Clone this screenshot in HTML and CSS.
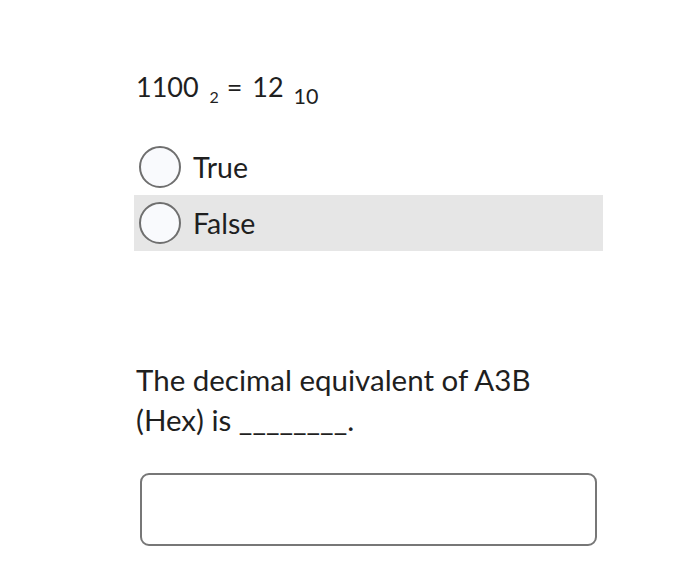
FILE: index.html
```html
<!DOCTYPE html>
<html>
<head>
<meta charset="utf-8">
<link rel="stylesheet" href="styles.css">
</head>
<body>
<div class="page">
  <section class="question">
    <p class="stem">1100 <sub class="sub-small">2</sub> <span class="eq">=</span> <span class="num">12</span> <sub class="sub-large">10</sub></p>
    <div class="options">
      <label class="option">
        <span class="radio"></span>
        <span class="option-text">True</span>
      </label>
      <label class="option option-hover">
        <span class="radio"></span>
        <span class="option-text">False</span>
      </label>
    </div>
  </section>
  <section class="question question-two">
    <p class="stem stem-two">The decimal equivalent of A3B (Hex) is ________.</p>
    <div class="answer-box"></div>
  </section>
</div>
</body>
</html>
```

FILE: styles.css
```css
html, body {
  margin: 0;
  padding: 0;
  background: #ffffff;
}

body {
  font-family: Lato, "Open Sans", sans-serif;
  color: #1f1f1f;
}

.page {
  width: 469px;
  padding: 66px 0 0 134px;
}

.stem {
  margin: 0 0 0 2px;
  font-size: 27px;
  line-height: 42px;
}

.sub-small {
  font-size: 16px;
  vertical-align: -6px;
  line-height: 0;
  margin-left: 4px;
}

.eq {
  margin-left: 1px;
}

.num {
  margin-left: 3px;
}

.sub-large {
  font-size: 21.5px;
  vertical-align: -7px;
  line-height: 0;
  margin-left: 3px;
}

.options {
  margin-top: 31px;
  display: flex;
  flex-direction: column;
}

.option {
  display: flex;
  align-items: center;
  height: 56px;
  gap: 12px;
  padding-left: 5px;
}

.option-hover {
  background: #e6e6e6;
}

.radio {
  width: 38px;
  height: 38px;
  border: 2px solid #6f6f6f;
  border-radius: 50%;
  background: #f9fafd;
  flex: none;
}

.option-text {
  font-size: 28.5px;
  line-height: 1;
}

.question-two {
  margin-top: 109px;
}

.stem-two {
  width: 420px;
  font-size: 29.5px;
  line-height: 40px;
}

.answer-box {
  margin: 33px 0 0 6px;
  width: 453px;
  height: 69px;
  border: 2px solid #777777;
  border-radius: 9px;
}
```
